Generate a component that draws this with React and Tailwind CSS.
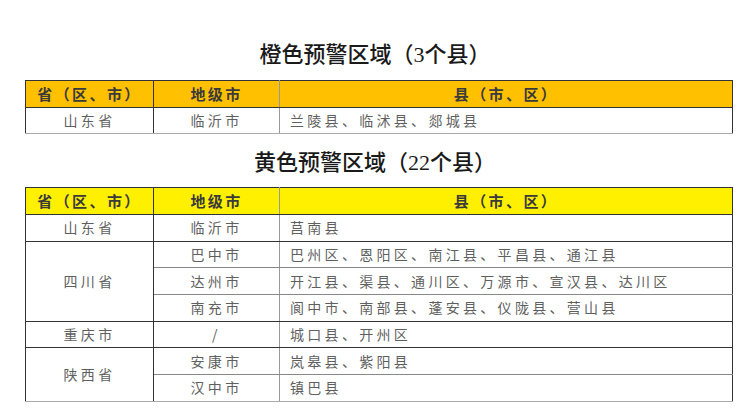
import React from 'react';

const cjk = { fontFamily: '"Noto Sans CJK SC", "Noto Sans", sans-serif' };
const titleFont = { fontFamily: '"Liberation Serif", "Noto Sans CJK SC", serif' };

const orangeRows = [
  { province: '山东省', city: '临沂市', counties: '兰陵县、临沭县、郯城县' },
];

// yellow table: groups of cities under one province
const yellowGroups = [
  { province: '山东省', cities: [{ city: '临沂市', counties: '莒南县' }] },
  {
    province: '四川省',
    cities: [
      { city: '巴中市', counties: '巴州区、恩阳区、南江县、平昌县、通江县' },
      { city: '达州市', counties: '开江县、渠县、通川区、万源市、宣汉县、达川区' },
      { city: '南充市', counties: '阆中市、南部县、蓬安县、仪陇县、营山县' },
    ],
  },
  { province: '重庆市', cities: [{ city: '/', counties: '城口县、开州区' }] },
  {
    province: '陕西省',
    cities: [
      { city: '安康市', counties: '岚皋县、紫阳县' },
      { city: '汉中市', counties: '镇巴县' },
    ],
  },
];

const HeaderRow = ({ bg }) => (
  <tr className={`h-[27px] ${bg}`}>
    <th className="w-[128px] border-y border-l border-r border-[#333] font-bold text-[15px] tracking-[2.4px] text-[#3a3a3a] text-center p-0">
      省（区、市）
    </th>
    <th className="w-[126px] border-y border-r border-y-[#333] border-r-[#999] font-bold text-[15px] tracking-[2.4px] text-[#3a3a3a] text-center p-0">
      地级市
    </th>
    <th className="border-y border-r border-[#333] font-bold text-[15px] tracking-[2.4px] text-[#3a3a3a] text-center p-0">
      县（市、区）
    </th>
  </tr>
);

const Title = ({ children, className = '' }) => (
  <div
    className={`h-[26px] flex items-center justify-center text-[22px] font-medium text-[#1a1a1a] ${className}`}
    style={titleFont}
  >
    {children}
  </div>
);

export default function App() {
  return (
    <div className="w-[750px] h-[408px] bg-white overflow-hidden pt-[41px]" style={cjk}>
      <Title>橙色预警区域（3个县）</Title>

      <table className="ml-[25px] mt-[13px] w-[708px] border-collapse table-fixed">
        <thead>
          <HeaderRow bg="bg-[#ffc000]" />
        </thead>
        <tbody>
          {orangeRows.map((r) => (
            <tr key={r.city} className="h-[26px] text-[14px] tracking-[3.3px] text-[#5f5f5f]">
              <td className="border-l border-r border-b border-l-[#333] border-r-[#333] border-b-[#aaa] text-center p-0">
                {r.province}
              </td>
              <td className="border-r border-b border-r-[#999] border-b-[#aaa] text-center p-0">{r.city}</td>
              <td className="border-r border-b border-r-[#333] border-b-[#aaa] pl-[10px] p-0">{r.counties}</td>
            </tr>
          ))}
        </tbody>
      </table>

      <Title className="mt-[15px]">黄色预警区域（22个县）</Title>

      <table className="ml-[25px] mt-[12px] w-[708px] border-collapse table-fixed">
        <thead>
          <HeaderRow bg="bg-[#fff000]" />
        </thead>
        <tbody>
          {yellowGroups.map((g, gi) =>
            g.cities.map((c, ci) => {
              const lastInGroup = ci === g.cities.length - 1;
              const lastOverall = gi === yellowGroups.length - 1 && lastInGroup;
              const bottom = lastOverall
                ? 'border-b-[#aaa]'
                : lastInGroup
                ? 'border-b-[#333]'
                : 'border-b-[#888]';
              return (
                <tr key={g.province + c.city} className="h-[26.7px] text-[14px] tracking-[3.3px] text-[#5f5f5f]">
                  {ci === 0 && (
                    <td
                      rowSpan={g.cities.length}
                      className={`border-l border-r border-b border-l-[#333] border-r-[#333] text-center p-0 ${
                        gi === yellowGroups.length - 1 ? 'border-b-[#aaa]' : 'border-b-[#333]'
                      }`}
                    >
                      {g.province}
                    </td>
                  )}
                  <td className={`border-r border-b border-r-[#999] text-center p-0 ${bottom}`}>{c.city}</td>
                  <td className={`border-r border-b border-r-[#333] pl-[10px] p-0 ${bottom}`}>{c.counties}</td>
                </tr>
              );
            })
          )}
        </tbody>
      </table>
    </div>
  );
}
